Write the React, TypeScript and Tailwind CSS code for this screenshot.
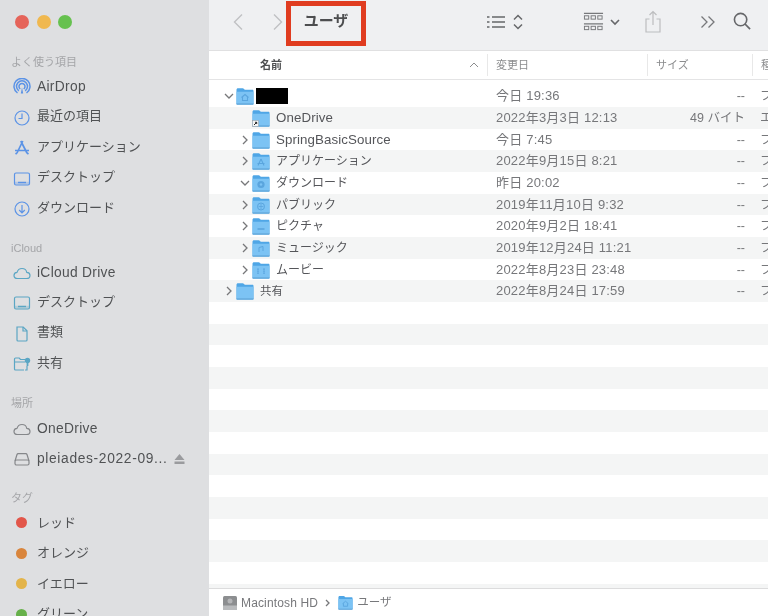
import React from "react";

const F = { fontFamily: '"Liberation Sans","Noto Sans CJK JP",sans-serif' };

type Sym = "home" | "alias" | "none" | "apps" | "down" | "public" | "pics" | "music" | "movie";

function Folder({ sym = "none", w = 18 }: { sym?: Sym; w?: number }) {
  const s = "#5aa5de";
  return (
    <svg width={w} height={w} viewBox="0 0 18 18" className="shrink-0">
      <path d="M.5 2.800C.5 1.900 1.100 1.200 2 1.200h4.700c.6 0 .9.2 1.300.7l.8.9H16.500c.6 0 1 .5 1 1.100V16.500c0 .6-.5 1-1 1H1.500c-.6 0-1-.5-1-1z" fill="#4fa6e6" />
      <path d="M.5 4.800h17V16.500c0 .6-.5 1-1 1H1.500c-.6 0-1-.5-1-1z" fill="#7cc3f4" />
      <path d="M.5 17h17" stroke="#5b9fd3" strokeWidth="1" />
      {sym === "home" && <path d="M5.500 10.500l3.500-3 3.500 3M6.500 10V13.500h5V10" fill="none" stroke={s} strokeWidth="1.100" />}
      {sym === "apps" && <path d="M9 7L6 13.500M9 7l3 6.500M5.500 11.500h7" fill="none" stroke={s} strokeWidth="1.100" />}
      {sym === "down" && <><circle cx="9" cy="10.500" r="3.600" fill={s} /><circle cx="9" cy="10.500" r="1.300" fill="#7cc3f4" /></>}
      {sym === "public" && <><circle cx="9" cy="10.500" r="3.500" fill="none" stroke={s} strokeWidth="1" /><path d="M9 8v5M6.500 10.500h5" stroke={s} strokeWidth="0.800" /></>}
      {sym === "pics" && <path d="M5.500 12h7" stroke={s} strokeWidth="1.600" />}
      {sym === "music" && <path d="M7 13V8.500l4-1V12" fill="none" stroke={s} strokeWidth="1" />}
      {sym === "movie" && <path d="M6 7.500v6M12 7.500v6" stroke={s} strokeWidth="1.800" strokeDasharray="1.200 .8" />}
      {sym === "alias" && (
        <>
          <rect x="0.500" y="11.500" width="6" height="6" fill="#f5f5f5" stroke="#999" strokeWidth="0.500" />
          <path d="M2 16l2.500-2.500M3 13.300h1.700V15" fill="none" stroke="#111" strokeWidth="0.900" />
        </>
      )}
    </svg>
  );
}

function Chev({ dir }: { dir: "right" | "down" | "none" }) {
  if (dir === "none") return <span className="w-2.5 shrink-0" />;
  return (
    <svg width="10" height="10" viewBox="0 0 10 10" className="shrink-0">
      <path d={dir === "right" ? "M3 1l4 4-4 4" : "M1 3l4 4 4-4"} fill="none" stroke="#77787a" strokeWidth="1.300" />
    </svg>
  );
}

const rows: { name: string; level: number; chev: "right" | "down" | "none"; sym: Sym; date: string; size: string; kind: string; hide?: boolean; latin?: boolean }[] = [
  { name: "", level: 0, chev: "down", sym: "home", date: "今日 19:36", size: "--", kind: "フォルダ", hide: true },
  { name: "OneDrive", level: 1, chev: "none", sym: "alias", date: "2022年3月3日 12:13", size: "49 バイト", kind: "エイリアス", latin: true },
  { name: "SpringBasicSource", level: 1, chev: "right", sym: "none", date: "今日 7:45", size: "--", kind: "フォルダ", latin: true },
  { name: "アプリケーション", level: 1, chev: "right", sym: "apps", date: "2022年9月15日 8:21", size: "--", kind: "フォルダ" },
  { name: "ダウンロード", level: 1, chev: "down", sym: "down", date: "昨日 20:02", size: "--", kind: "フォルダ" },
  { name: "パブリック", level: 1, chev: "right", sym: "public", date: "2019年11月10日 9:32", size: "--", kind: "フォルダ" },
  { name: "ピクチャ", level: 1, chev: "right", sym: "pics", date: "2020年9月2日 18:41", size: "--", kind: "フォルダ" },
  { name: "ミュージック", level: 1, chev: "right", sym: "music", date: "2019年12月24日 11:21", size: "--", kind: "フォルダ" },
  { name: "ムービー", level: 1, chev: "right", sym: "movie", date: "2022年8月23日 23:48", size: "--", kind: "フォルダ" },
  { name: "共有", level: 0, chev: "right", sym: "none", date: "2022年8月24日 17:59", size: "--", kind: "フォルダ" },
];

function Ico({ children, c }: { children: React.ReactNode; c: string }) {
  return (
    <svg width="18" height="18" viewBox="0 0 18 18" fill="none" stroke={c} strokeWidth="1.200" className="shrink-0">
      {children}
    </svg>
  );
}

const BLUE = "#5b93e6";
const TEAL = "#5ba6c4";
const GREY = "#85878a";

const icons: Record<string, React.ReactNode> = {
  airdrop: (
    <Ico c={BLUE}>
      <path d="M4.500 15A8 8 0 1 1 13.500 15" strokeWidth="1.500" />
      <path d="M5.800 12.800A5.500 5.500 0 1 1 12.200 12.800" strokeWidth="1.500" />
      <path d="M7.300 11A3 3 0 1 1 10.700 11" strokeWidth="1.500" />
      <path d="M9 9.500L7.800 15.500h2.400z" fill={BLUE} stroke="none" />
    </Ico>
  ),
  clock: (
    <Ico c={BLUE}>
      <circle cx="9" cy="9" r="7" />
      <path d="M9 4.500V9.500H5.500" />
    </Ico>
  ),
  apps: (
    <Ico c={BLUE}>
      <path d="M9.800 2L4 14M7.800 2L14 14M2 11.500h14M2.500 15l1.500-1M14 14l1.500 1" strokeWidth="1.700" />
    </Ico>
  ),
  desktop: (
    <Ico c={BLUE}>
      <rect x="1.500" y="3" width="15" height="12" rx="1.500" />
      <path d="M2 11.800h14v2.700H2z" fill={BLUE} fillOpacity="0.300" stroke="none" />
      <path d="M5 12.500h8" strokeWidth="1.400" />
    </Ico>
  ),
  download: (
    <Ico c={BLUE}>
      <circle cx="9" cy="9" r="7" />
      <path d="M9 5v7.500M6.200 10L9 12.800 11.800 10" />
    </Ico>
  ),
  cloud: (
    <Ico c={TEAL}>
      <path d="M4.500 14.500C2.400 14.500 1 13.200 1 11.400c0-1.700 1.300-3 3-3.100C4.700 6 6.600 4.500 9 4.500c2.500 0 4.300 1.600 4.800 3.800 1.900.1 3.200 1.400 3.200 3.100 0 1.800-1.400 3.100-3.500 3.100z" />
    </Ico>
  ),
  desktop2: (
    <Ico c={TEAL}>
      <rect x="1.500" y="3" width="15" height="12" rx="1.500" />
      <path d="M2 11.800h14v2.700H2z" fill={TEAL} fillOpacity="0.300" stroke="none" />
      <path d="M5 12.500h8" strokeWidth="1.400" />
    </Ico>
  ),
  doc: (
    <Ico c={TEAL}>
      <path d="M4 2h6.200L14 5.800V15c0 .6-.4 1-1 1H5c-.6 0-1-.4-1-1V2z" />
      <path d="M10 2v4h4" />
    </Ico>
  ),
  shared: (
    <Ico c={TEAL}>
      <path d="M11 15H2.500c-.6 0-1-.4-1-1V4c0-.6.4-1 1-1h3.700l1.300 1.500H12M1.500 7H12M14 11v4H12" />
      <circle cx="14.500" cy="5.500" r="2.700" fill={TEAL} stroke="none" />
      <path d="M14.500 8v3" strokeWidth="1.800" />
    </Ico>
  ),
  cloudG: (
    <Ico c={GREY}>
      <path d="M4.500 14.500C2.400 14.500 1 13.200 1 11.400c0-1.700 1.300-3 3-3.100C4.700 6 6.600 4.500 9 4.500c2.500 0 4.300 1.600 4.800 3.800 1.900.1 3.200 1.400 3.200 3.100 0 1.800-1.400 3.100-3.500 3.100z" />
    </Ico>
  ),
  hdd: (
    <Ico c={GREY}>
      <path d="M2 11l2-6.500c.2-.6.600-.9 1.200-.9h7.600c.6 0 1 .3 1.200.9l2 6.500" />
      <rect x="2" y="10" width="14" height="5" rx="1.500" />
    </Ico>
  ),
};

function Label({ children, cls }: { children: React.ReactNode; cls: string }) {
  return <div className={`pl-[11px] text-[11px] leading-4 text-[#a4a5a8] ${cls}`}>{children}</div>;
}

function Item({ icon, text, eject, latin }: { icon: string; text: string; eject?: boolean; latin?: boolean }) {
  return (
    <div className="flex h-[30.500px] items-center pl-[13px] text-[#505254]">
      {icons[icon]}
      <span className={`ml-[6px] whitespace-nowrap leading-5 ${eject ? "text-[13.800px] tracking-[0.65px]" : latin ? "text-[13.800px] tracking-[0.3px]" : "pb-[3px] text-[13px]"}`}>{text}</span>
      {eject && (
        <svg width="11" height="10" viewBox="0 0 11 10" className="ml-[7px]">
          <path d="M5.500 0L10.500 6H.5zM.5 7.500h10V10H.5z" fill="#9a9b9e" />
        </svg>
      )}
    </div>
  );
}

function Tag({ c, text }: { c: string; text: string }) {
  return (
    <div className="flex h-[30.500px] items-center pl-[16px] text-[#505254]">
      <span className={`h-[11px] w-[11px] rounded-full ${c}`} />
      <span className="ml-[10px] whitespace-nowrap text-[13px] leading-5">{text}</span>
    </div>
  );
}

export default function App() {
  const blanks = Array.from({ length: 14 });
  return (
    <div style={F} className="flex h-[616px] w-[768px] overflow-hidden bg-white blur-[0.4px]">
      <aside className="w-[209px] shrink-0 overflow-hidden bg-[#dedfe1]">
        <div className="flex gap-[7.500px] pl-[15px] pt-[15px]">
          <span className="h-[14px] w-[14px] rounded-full bg-[#e5645a]" />
          <span className="h-[14px] w-[14px] rounded-full bg-[#f0b84f]" />
          <span className="h-[14px] w-[14px] rounded-full bg-[#66c14f]" />
        </div>
        <Label cls="mt-[25px]">よく使う項目</Label>
        <div className="mt-[2px]">
          <Item icon="airdrop" text="AirDrop" latin />
          <Item icon="clock" text="最近の項目" />
          <Item icon="apps" text="アプリケーション" />
          <Item icon="desktop" text="デスクトップ" />
          <Item icon="download" text="ダウンロード" />
        </div>
        <Label cls="mt-[15px]">iCloud</Label>
        <div className="mt-[2px]">
          <Item icon="cloud" text="iCloud Drive" latin />
          <Item icon="desktop2" text="デスクトップ" />
          <Item icon="doc" text="書類" />
          <Item icon="shared" text="共有" />
        </div>
        <Label cls="mt-[15px]">場所</Label>
        <div className="mt-[3px]">
          <Item icon="cloudG" text="OneDrive" latin />
          <Item icon="hdd" text="pleiades-2022-09..." eject latin />
        </div>
        <Label cls="mt-[15px]">タグ</Label>
        <div className="mt-[2px]">
          <Tag c="bg-[#e2564a]" text="レッド" />
          <Tag c="bg-[#d9853c]" text="オレンジ" />
          <Tag c="bg-[#e3b44a]" text="イエロー" />
          <Tag c="bg-[#66b04a]" text="グリーン" />
        </div>
      </aside>

      <main className="flex min-w-0 flex-1 flex-col">
        <header className="flex h-[51px] shrink-0 items-center border-b border-[#e0e0e1] bg-[#eff0f2]">
          <svg width="12" height="18" viewBox="0 0 12 18" className="mb-[7px] ml-[23px]" fill="none" stroke="#c0c1c3" strokeWidth="1.400">
            <path d="M10 1.500L2.500 9l7.500 7.500" />
          </svg>
          <svg width="12" height="18" viewBox="0 0 12 18" className="mb-[7px] ml-[28px]" fill="none" stroke="#c0c1c3" strokeWidth="1.400">
            <path d="M2 1.500L9.500 9 2 16.500" />
          </svg>
          <div className="mb-[3px] ml-[2px] flex h-[45px] w-[80px] justify-center border-[5px] border-[#e03c20] pt-[5px] text-[15px] font-bold leading-5 text-[#4d4e50]">
            ユーザ
          </div>
          <svg width="20" height="16" viewBox="0 0 20 16" className="mb-[7px] ml-[120px]" stroke="#66676a" strokeWidth="1.300">
            <path d="M6 3h13M6 8h13M6 13h13M1 3h2.500M1 8h2.500M1 13h2.500" />
          </svg>
          <svg width="12" height="18" viewBox="0 0 12 18" className="mb-[7px] ml-[6px]" fill="none" stroke="#66676a" strokeWidth="1.500">
            <path d="M2 6.500L6 2.500l4 4M2 11.500l4 4 4-4" />
          </svg>
          <svg width="21" height="20" viewBox="0 0 22 20" className="mb-[7px] ml-[59px]" fill="none" stroke="#77787b" strokeWidth="1">
            <path d="M1 1h20M1 12h20" strokeWidth="1.200" />
            <rect x="1.500" y="3.500" width="4.500" height="3.500" />
            <rect x="8.500" y="3.500" width="4.500" height="3.500" />
            <rect x="15.500" y="3.500" width="4.500" height="3.500" />
            <rect x="1.500" y="14.500" width="4.500" height="3.500" />
            <rect x="8.500" y="14.500" width="4.500" height="3.500" />
            <rect x="15.500" y="14.500" width="4.500" height="3.500" />
          </svg>
          <svg width="10" height="8" viewBox="0 0 10 8" className="mb-[7px] ml-[6px]" fill="none" stroke="#66676a" strokeWidth="1.600">
            <path d="M1 2l4 4 4-4" />
          </svg>
          <svg width="18" height="24" viewBox="0 0 18 24" className="mb-[7px] ml-[24px]" fill="none" stroke="#bcbdbf" strokeWidth="1.200">
            <path d="M5.500 9H2v13h14V9h-3.500M9 15V2M5.500 5L9 1.500 12.500 5" />
          </svg>
          <svg width="16" height="14" viewBox="0 0 16 14" className="mb-[7px] ml-[38px]" fill="none" stroke="#77787b" strokeWidth="1.300">
            <path d="M1.500 1.500L7 7l-5.500 5.500M8.500 1.500L14 7l-5.500 5.500" />
          </svg>
          <svg width="19" height="19" viewBox="0 0 20 20" className="mb-[7px] ml-[17px]" fill="none" stroke="#66676a" strokeWidth="1.700">
            <circle cx="8" cy="8" r="6.500" />
            <path d="M12.500 12.500L18 18" />
          </svg>
        </header>

        <div className="flex h-[29px] shrink-0 items-center border-b border-[#e4e4e5] text-[11px] text-[#8b8c8e]">
          <div className="flex h-[22px] w-[279px] shrink-0 items-center border-r border-[#e8e8e8] pl-[51px]">
            <span className="font-bold text-[#4f5052]">名前</span>
            <svg width="10" height="6" viewBox="0 0 10 6" className="ml-[187px]" fill="none" stroke="#8b8c8e" strokeWidth="1">
              <path d="M1 5l4-4 4 4" />
            </svg>
          </div>
          <div className="flex h-[22px] w-[160px] shrink-0 items-center border-r border-[#e8e8e8] pl-[8px]">変更日</div>
          <div className="flex h-[22px] w-[105px] shrink-0 items-center border-r border-[#e8e8e8] pl-[8px]">サイズ</div>
          <div className="overflow-hidden whitespace-nowrap pl-[8px]">種類</div>
        </div>

        <div className="flex-1 overflow-hidden pt-[5.500px]">
          {rows.map((r, i) => (
            <div key={i} className={`flex h-[21.670px] items-center ${i % 2 === 1 ? "bg-[#f4f5f5]" : "bg-white"}`}>
              <div className={`flex w-[278px] shrink-0 items-center ${r.level === 0 ? "pl-[15px]" : "pl-[31px]"}`}>
                <span className="mr-[2px] flex"><Chev dir={r.chev} /></span>
                <Folder sym={r.sym} />
                {r.hide ? (
                  <span className="ml-[2px] h-[16px] w-[32px] bg-black" />
                ) : (
                  <span className={`ml-[6px] whitespace-nowrap leading-5 text-[#55565a] ${r.level === 0 ? "text-[11.500px]" : r.latin ? "text-[13.300px] tracking-[0.1px]" : "text-[12px]"}`}>{r.name}</span>
                )}
              </div>
              <div className="w-[160px] shrink-0 whitespace-nowrap pl-[9px] text-[13px] leading-5 tracking-[0.2px] text-[#76777a]">{r.date}</div>
              <div className="w-[105px] shrink-0 whitespace-nowrap pr-[7px] text-right text-[12.500px] leading-5 text-[#76777a]">{r.size}</div>
              <div className="overflow-hidden whitespace-nowrap pl-[8px] text-[12.500px] leading-5 text-[#76777a]">{r.kind}</div>
            </div>
          ))}
          {blanks.map((_, i) => (
            <div key={i} className={`h-[21.670px] ${i % 2 === 0 ? "bg-white" : "bg-[#f4f5f5]"}`} />
          ))}
        </div>

        <footer className="flex h-[28px] shrink-0 items-center border-t border-[#dcdcdd] bg-white pl-[13px] text-[12px] text-[#77787b]">
          <svg width="16" height="16" viewBox="0 0 16 16" className="shrink-0">
            <rect x="1" y="1" width="14" height="14" rx="1.500" fill="#8c8e90" />
            <rect x="1" y="10.500" width="14" height="4.500" fill="#b9bbbd" />
            <circle cx="8" cy="6" r="2.500" fill="#b5b6b8" />
          </svg>
          <span className="ml-[3px] tracking-[0.15px]">Macintosh HD</span>
          <svg width="6" height="8" viewBox="0 0 6 8" className="ml-[7px]" fill="none" stroke="#77787b" strokeWidth="1.300">
            <path d="M1 1l3 3-3 3" />
          </svg>
          <span className="ml-[7px] flex"><Folder sym="home" w={15} /></span>
          <span className="ml-[4px] text-[11.500px]">ユーザ</span>
        </footer>
      </main>
    </div>
  );
}
